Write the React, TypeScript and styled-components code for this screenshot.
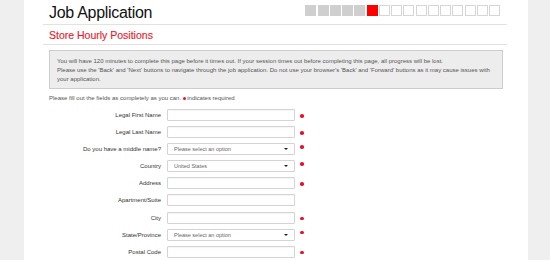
import React from 'react';
import styled, { createGlobalStyle } from 'styled-components';

const GlobalStyle = createGlobalStyle`
  body {
    margin: 0;
    background: #efefef;
    font-family: "Liberation Sans", Arial, sans-serif;
    color: #333;
  }
`;

const TOTAL_STEPS = 16;
const CURRENT_STEP = 5;

interface Field {
  label: string;
  kind: 'text' | 'select';
  value?: string;
  required: boolean;
}

const fields: Field[] = [
  { label: 'Legal First Name', kind: 'text', required: true },
  { label: 'Legal Last Name', kind: 'text', required: true },
  { label: 'Do you have a middle name?', kind: 'select', value: 'Please select an option', required: true },
  { label: 'Country', kind: 'select', value: 'United States', required: true },
  { label: 'Address', kind: 'text', required: true },
  { label: 'Apartment/Suite', kind: 'text', required: false },
  { label: 'City', kind: 'text', required: true },
  { label: 'State/Province', kind: 'select', value: 'Please select an option', required: true },
  { label: 'Postal Code', kind: 'text', required: true },
];

const App = () => {
  return (
    <>
      <GlobalStyle />
      <Page>
        <Header>
          <Title>Job Application</Title>
          <Steps>
            {Array.from({ length: TOTAL_STEPS }).map((_, i) => (
              <Step key={i} state={i < CURRENT_STEP ? 'done' : i === CURRENT_STEP ? 'current' : 'todo'} />
            ))}
          </Steps>
        </Header>
        <SubHeader>Store Hourly Positions</SubHeader>

        <Notice>
          You will have 120 minutes to complete this page before it times out. If your session times out before completing this page, all progress will be lost.
          <br />
          Please use the 'Back' and 'Next' buttons to navigate through the job application. Do not use your browser's 'Back' and 'Forward' buttons as it may cause issues with your application.
        </Notice>

        <Hint>
          Please fill out the fields as completely as you can. <HintDot />indicates required
        </Hint>

        <Form>
          {fields.map((f) => (
            <React.Fragment key={f.label}>
              <Label>{f.label}</Label>
              {f.kind === 'select' ? (
                <Select>
                  <span>{f.value}</span>
                  <Caret />
                </Select>
              ) : (
                <Input type="text" />
              )}
              <DotCell>{f.required && <Dot top={f.kind === 'select'} />}</DotCell>
            </React.Fragment>
          ))}
        </Form>
      </Page>
    </>
  );
};

export default App;

const Page = styled.div`
  width: 504px;
  margin-left: 24px;
  height: 260px;
  overflow: hidden;
  background: #fff;
  box-sizing: border-box;
  padding: 0 21px 0 19px;
`;

const Header = styled.div`
  display: flex;
  justify-content: space-between;
  align-items: flex-start;
  height: 25px;
  box-sizing: border-box;
  border-bottom: 1px solid #e2e2e2;
  padding: 0 7px 0 6px;
`;

const Title = styled.h1`
  margin: 0;
  font-weight: normal;
  font-size: 16px;
  letter-spacing: -0.3px;
  line-height: 25px;
  color: #111;
`;

const Steps = styled.div`
  display: flex;
  gap: 1.25px;
  margin-top: 5px;
`;

const Step = styled.div<{ state: 'done' | 'current' | 'todo' }>`
  width: 11px;
  height: 11px;
  box-sizing: border-box;
  background: ${(p) => (p.state === 'done' ? '#cfcfcf' : p.state === 'current' ? '#f00' : '#fff')};
  border: 1px solid ${(p) => (p.state === 'done' ? '#cfcfcf' : p.state === 'current' ? '#f00' : '#d6d6d6')};
`;

const SubHeader = styled.h2`
  margin: 0;
  height: 20px;
  box-sizing: border-box;
  border-bottom: 1px solid #e2e2e2;
  padding-left: 6px;
  font-weight: normal;
  font-size: 10.5px;
  line-height: 20px;
  color: #ea1b2d;
  -webkit-text-stroke: 0.15px #ea1b2d;
`;

const Notice = styled.div`
  margin: 5px 4px 0 6px;
  height: 39px;
  box-sizing: border-box;
  background: #ededed;
  border: 1px solid #cdcdcd;
  padding: 6px 8px 0 7px;
  font-size: 6px;
  line-height: 9px;
  color: #555;
`;

const Hint = styled.div`
  margin: 5px 0 0 6px;
  font-size: 6px;
  line-height: 9px;
  color: #555;
`;

const HintDot = styled.span`
  display: inline-block;
  width: 3.5px;
  height: 3.5px;
  border-radius: 50%;
  background: #e8112d;
  margin-right: 1px;
`;

const Form = styled.div`
  display: grid;
  grid-template-columns: 112px 128px 10px;
  grid-auto-rows: 12px;
  column-gap: 6px;
  row-gap: 5.1px;
  margin: 6px 0 0 6px;
`;

const Label = styled.div`
  text-align: right;
  font-size: 6px;
  line-height: 12px;
  color: #333;
`;

const Input = styled.input`
  height: 12px;
  box-sizing: border-box;
  margin: 0;
  padding: 0 6px;
  border: 1px solid #d4d4d4;
  border-radius: 1px;
  box-shadow: inset 0 1px 1px rgba(0, 0, 0, 0.04);
  font-family: inherit;
  font-size: 6px;
  outline: none;
`;

const Select = styled.div`
  height: 12px;
  box-sizing: border-box;
  display: flex;
  align-items: center;
  justify-content: space-between;
  padding: 0 6px;
  border: 1px solid #d4d4d4;
  border-radius: 1px;
  font-size: 5.5px;
  color: #666;
`;

const Caret = styled.span`
  width: 0;
  height: 0;
  border-left: 2.5px solid transparent;
  border-right: 2.5px solid transparent;
  border-top: 2.5px solid #222;
`;

const DotCell = styled.div`
  font-size: 0;
  line-height: 0;
`;

const Dot = styled.span<{ top?: boolean }>`
  display: block;
  width: 3.5px;
  height: 3.5px;
  border-radius: 50%;
  background: #e8112d;
  margin-top: ${(p) => (p.top ? '2px' : '5px')};
  margin-left: -1px;
`;
